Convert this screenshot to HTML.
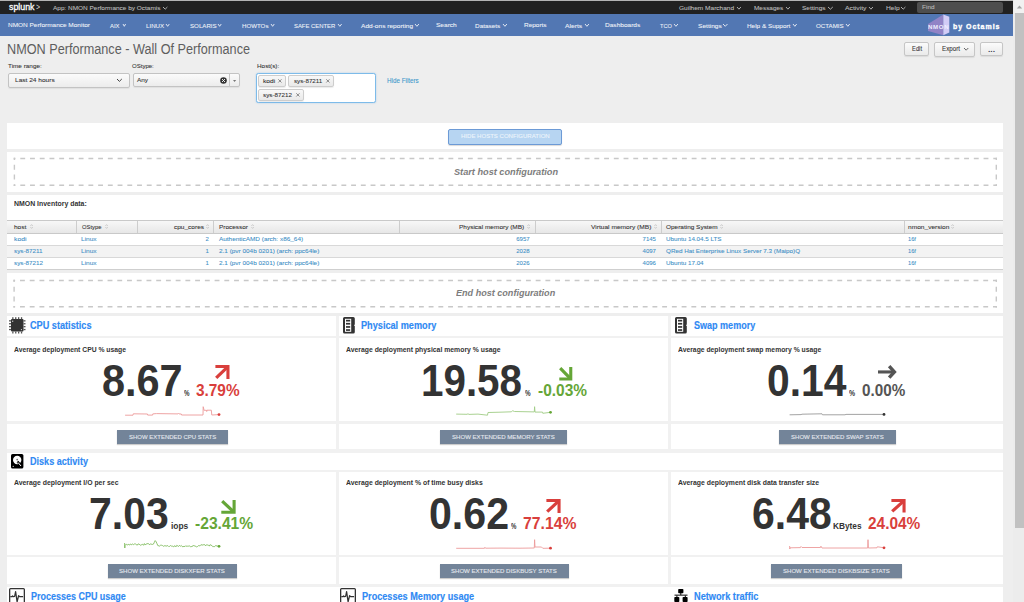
<!DOCTYPE html><html><head><meta charset="utf-8"><style>
html,body{margin:0;padding:0;}
body{width:1024px;height:602px;overflow:hidden;position:relative;background:#eeeeee;font-family:"Liberation Sans",sans-serif;}
.t{position:absolute;white-space:nowrap;transform-origin:0 0;}
.r{position:absolute;box-sizing:border-box;}
svg{position:absolute;overflow:visible;}
</style></head><body>
<div class="r" style="left:0.00px;top:0.00px;width:1013.00px;height:1.00px;background:#b4b4b4"></div>
<div class="r" style="left:0.00px;top:1.00px;width:1013.00px;height:13.00px;background:#212121"></div>
<div class="r" style="left:0.00px;top:14.00px;width:1013.00px;height:22.00px;background:#5277b3"></div>
<div class="r" style="left:1013.00px;top:0.00px;width:11.00px;height:602.00px;background:#ececec"></div>
<div class="r" style="left:1014.00px;top:0.00px;width:10.00px;height:13.00px;background:#f1f1f1"></div>
<svg style="left:1016px;top:4px" width="7" height="5"><polygon points="0.8,4.6 3.5,1.6 6.2,4.6" fill="#a3a3a3"/></svg>
<div class="r" style="left:1015.00px;top:13.00px;width:9.00px;height:515.00px;background:#c1c1c1"></div>
<div class="t" style="left:8.80px;top:2px;font-size:9.0px;line-height:normal;color:#ffffff;font-weight:normal;font-style:normal;transform:scaleX(0.9768);-webkit-text-stroke:0.3px #fff">splunk</div>
<div class="t" style="left:35.60px;top:1px;font-size:9.5px;line-height:normal;color:#d8d8d8;font-weight:normal;font-style:normal;transform:scaleX(0.7333);">&gt;</div>
<div class="t" style="left:52.70px;top:5px;font-size:5.7px;line-height:normal;color:#bdbdbd;font-weight:normal;font-style:normal;-webkit-text-stroke:0.08px #bdbdbd;transform:scaleX(1.1329);">App: NMON Performance by Octamis</div>
<svg style="left:161.50px;top:5.60px;opacity:1" width="6.4" height="4.2"><path d="M1 1 L3.20 3.20 L5.40 1" stroke="#bdbdbd" stroke-width="0.9" fill="none"/></svg>
<div class="t" style="left:679.20px;top:5px;font-size:5.7px;line-height:normal;color:#bdbdbd;font-weight:normal;font-style:normal;-webkit-text-stroke:0.08px #bdbdbd;transform:scaleX(1.1465);">Guilhem Marchand</div>
<svg style="left:735.80px;top:5.60px;opacity:1" width="5.900000000000091" height="4.2"><path d="M1 1 L2.95 3.20 L4.90 1" stroke="#bdbdbd" stroke-width="0.9" fill="none"/></svg>
<div class="t" style="left:753.50px;top:5px;font-size:5.7px;line-height:normal;color:#bdbdbd;font-weight:normal;font-style:normal;-webkit-text-stroke:0.08px #bdbdbd;transform:scaleX(1.1312);">Messages</div>
<svg style="left:784.60px;top:5.60px;opacity:1" width="5.899999999999977" height="4.2"><path d="M1 1 L2.95 3.20 L4.90 1" stroke="#bdbdbd" stroke-width="0.9" fill="none"/></svg>
<div class="t" style="left:802.30px;top:5px;font-size:5.7px;line-height:normal;color:#bdbdbd;font-weight:normal;font-style:normal;-webkit-text-stroke:0.08px #bdbdbd;transform:scaleX(1.1446);">Settings</div>
<svg style="left:826.80px;top:5.60px;opacity:1" width="6.800000000000068" height="4.2"><path d="M1 1 L3.40 3.20 L5.80 1" stroke="#bdbdbd" stroke-width="0.9" fill="none"/></svg>
<div class="t" style="left:845.20px;top:5px;font-size:5.7px;line-height:normal;color:#bdbdbd;font-weight:normal;font-style:normal;-webkit-text-stroke:0.08px #bdbdbd;transform:scaleX(1.1889);">Activity</div>
<svg style="left:868.00px;top:5.60px;opacity:1" width="5.899999999999977" height="4.2"><path d="M1 1 L2.95 3.20 L4.90 1" stroke="#bdbdbd" stroke-width="0.9" fill="none"/></svg>
<div class="t" style="left:885.60px;top:5px;font-size:5.7px;line-height:normal;color:#bdbdbd;font-weight:normal;font-style:normal;-webkit-text-stroke:0.08px #bdbdbd;transform:scaleX(1.1704);">Help</div>
<svg style="left:900.00px;top:5.60px;opacity:1" width="6.399999999999977" height="4.2"><path d="M1 1 L3.20 3.20 L5.40 1" stroke="#bdbdbd" stroke-width="0.9" fill="none"/></svg>
<div class="r" style="left:917.00px;top:2.40px;width:86.00px;height:10.30px;background:#4e4e4e;border-radius:2px"></div>
<div class="t" style="left:921.70px;top:4px;font-size:6.0px;line-height:normal;color:#b8b8b8;font-weight:normal;font-style:normal;-webkit-text-stroke:0.08px #b8b8b8;transform:scaleX(1.0763);">Find</div>
<div class="t" style="left:8.10px;top:21px;font-size:6.1px;line-height:normal;color:#eef2f8;font-weight:normal;font-style:normal;-webkit-text-stroke:0.08px #eef2f8;transform:scaleX(1.0612);">NMON Performance Monitor</div>
<div class="t" style="left:110.00px;top:22px;font-size:6.1px;line-height:normal;color:#eef2f8;font-weight:normal;font-style:normal;-webkit-text-stroke:0.08px #eef2f8;transform:scaleX(0.9634);">AIX</div>
<svg style="left:121.70px;top:23.30px;opacity:1" width="4.599999999999989" height="4.3"><path d="M1 1 L2.30 3.30 L3.60 1" stroke="#eef2f8" stroke-width="0.9" fill="none"/></svg>
<div class="t" style="left:145.50px;top:22px;font-size:6.1px;line-height:normal;color:#eef2f8;font-weight:normal;font-style:normal;-webkit-text-stroke:0.08px #eef2f8;transform:scaleX(1.0121);">LINUX</div>
<svg style="left:165.30px;top:23.30px;opacity:1" width="5.300000000000006" height="4.3"><path d="M1 1 L2.65 3.30 L4.30 1" stroke="#eef2f8" stroke-width="0.9" fill="none"/></svg>
<div class="t" style="left:189.50px;top:22px;font-size:6.1px;line-height:normal;color:#eef2f8;font-weight:normal;font-style:normal;-webkit-text-stroke:0.08px #eef2f8;transform:scaleX(1.0094);">SOLARIS</div>
<svg style="left:217.20px;top:23.30px;opacity:1" width="5.249999999999995" height="4.3"><path d="M1 1 L2.62 3.30 L4.25 1" stroke="#eef2f8" stroke-width="0.9" fill="none"/></svg>
<div class="t" style="left:241.50px;top:22px;font-size:6.1px;line-height:normal;color:#eef2f8;font-weight:normal;font-style:normal;-webkit-text-stroke:0.08px #eef2f8;transform:scaleX(1.0059);">HOWTOs</div>
<svg style="left:269.55px;top:23.30px;opacity:1" width="5.250000000000023" height="4.3"><path d="M1 1 L2.63 3.30 L4.25 1" stroke="#eef2f8" stroke-width="0.9" fill="none"/></svg>
<div class="t" style="left:293.50px;top:22px;font-size:6.1px;line-height:normal;color:#eef2f8;font-weight:normal;font-style:normal;-webkit-text-stroke:0.08px #eef2f8;transform:scaleX(0.9685);">SAFE CENTER</div>
<svg style="left:337.05px;top:23.30px;opacity:1" width="5.65" height="4.3"><path d="M1 1 L2.83 3.30 L4.65 1" stroke="#eef2f8" stroke-width="0.9" fill="none"/></svg>
<div class="t" style="left:361.00px;top:22px;font-size:6.1px;line-height:normal;color:#eef2f8;font-weight:normal;font-style:normal;-webkit-text-stroke:0.08px #eef2f8;transform:scaleX(1.0770);">Add-ons reporting</div>
<svg style="left:414.40px;top:23.30px;opacity:1" width="5.9" height="4.3"><path d="M1 1 L2.95 3.30 L4.90 1" stroke="#eef2f8" stroke-width="0.9" fill="none"/></svg>
<div class="t" style="left:435.90px;top:21px;font-size:6.1px;line-height:normal;color:#eef2f8;font-weight:normal;font-style:normal;-webkit-text-stroke:0.08px #eef2f8;transform:scaleX(1.0757);">Search</div>
<div class="t" style="left:475.00px;top:22px;font-size:6.1px;line-height:normal;color:#eef2f8;font-weight:normal;font-style:normal;-webkit-text-stroke:0.08px #eef2f8;transform:scaleX(1.0520);">Datasets</div>
<svg style="left:501.90px;top:23.30px;opacity:1" width="5.9" height="4.3"><path d="M1 1 L2.95 3.30 L4.90 1" stroke="#eef2f8" stroke-width="0.9" fill="none"/></svg>
<div class="t" style="left:523.50px;top:21px;font-size:6.1px;line-height:normal;color:#eef2f8;font-weight:normal;font-style:normal;-webkit-text-stroke:0.08px #eef2f8;transform:scaleX(1.0568);">Reports</div>
<div class="t" style="left:565.10px;top:22px;font-size:6.1px;line-height:normal;color:#eef2f8;font-weight:normal;font-style:normal;-webkit-text-stroke:0.08px #eef2f8;transform:scaleX(1.1043);">Alerts</div>
<svg style="left:583.70px;top:23.30px;opacity:1" width="5.9" height="4.3"><path d="M1 1 L2.95 3.30 L4.90 1" stroke="#eef2f8" stroke-width="0.9" fill="none"/></svg>
<div class="t" style="left:605.10px;top:21px;font-size:6.1px;line-height:normal;color:#eef2f8;font-weight:normal;font-style:normal;-webkit-text-stroke:0.08px #eef2f8;transform:scaleX(1.0728);">Dashboards</div>
<div class="t" style="left:659.75px;top:22px;font-size:6.1px;line-height:normal;color:#eef2f8;font-weight:normal;font-style:normal;-webkit-text-stroke:0.08px #eef2f8;transform:scaleX(0.9259);">TCO</div>
<svg style="left:672.90px;top:23.30px;opacity:1" width="5.9" height="4.3"><path d="M1 1 L2.95 3.30 L4.90 1" stroke="#eef2f8" stroke-width="0.9" fill="none"/></svg>
<div class="t" style="left:697.50px;top:22px;font-size:6.1px;line-height:normal;color:#eef2f8;font-weight:normal;font-style:normal;-webkit-text-stroke:0.08px #eef2f8;transform:scaleX(1.0809);">Settings</div>
<svg style="left:722.30px;top:23.30px;opacity:1" width="6.500000000000023" height="4.3"><path d="M1 1 L3.25 3.30 L5.50 1" stroke="#eef2f8" stroke-width="0.9" fill="none"/></svg>
<div class="t" style="left:746.50px;top:22px;font-size:6.1px;line-height:normal;color:#eef2f8;font-weight:normal;font-style:normal;-webkit-text-stroke:0.08px #eef2f8;transform:scaleX(1.0496);">Help &amp; Support</div>
<svg style="left:791.70px;top:23.30px;opacity:1" width="5.700000000000069" height="4.3"><path d="M1 1 L2.85 3.30 L4.70 1" stroke="#eef2f8" stroke-width="0.9" fill="none"/></svg>
<div class="t" style="left:815.70px;top:22px;font-size:6.1px;line-height:normal;color:#eef2f8;font-weight:normal;font-style:normal;-webkit-text-stroke:0.08px #eef2f8;transform:scaleX(1.0131);">OCTAMIS</div>
<svg style="left:844.80px;top:23.30px;opacity:1" width="5.699999999999955" height="4.3"><path d="M1 1 L2.85 3.30 L4.70 1" stroke="#eef2f8" stroke-width="0.9" fill="none"/></svg>
<svg style="left:0;top:0" width="1024" height="40"><polygon points="928,24 943.3,14.6 943.3,35.3 928,30.9" fill="#9183c6"/><polygon points="943.3,14.6 949.3,16.8 949.3,32.6 943.3,35.3" fill="#d2ccf6"/></svg>
<div class="t" style="left:927.90px;top:24px;font-size:5.4px;line-height:normal;color:#eeeeff;font-weight:bold;font-style:normal;letter-spacing:0.6px;transform:scaleX(1.1264);">NMON</div>
<div class="t" style="left:953.00px;top:22px;font-size:7.2px;line-height:normal;color:#ffffff;font-weight:bold;font-style:normal;letter-spacing:1.0px;transform:scaleX(0.9738);-webkit-text-stroke:0.35px #fff">by Octamis</div>
<div class="t" style="left:7.35px;top:41px;font-size:14.0px;line-height:normal;color:#5e5e5e;font-weight:normal;font-style:normal;transform:scaleX(0.9046);">NMON Performance - Wall Of Performance</div>
<div class="r" style="left:904.20px;top:41.50px;width:25.30px;height:14.10px;background:linear-gradient(#fbfbfb,#eaeaea);border:1px solid #c6c6c6;border-radius:2px;box-shadow:0 1px 1px rgba(0,0,0,0.08)"></div>
<div class="t" style="left:912.00px;top:45px;font-size:6.9px;line-height:normal;color:#333;font-weight:normal;font-style:normal;-webkit-text-stroke:0.08px #333;transform:scaleX(0.8445);">Edit</div>
<div class="r" style="left:934.30px;top:41.50px;width:41.20px;height:15.00px;background:linear-gradient(#fbfbfb,#eaeaea);border:1px solid #c6c6c6;border-radius:2px;box-shadow:0 1px 1px rgba(0,0,0,0.08)"></div>
<div class="t" style="left:941.80px;top:45px;font-size:6.9px;line-height:normal;color:#333;font-weight:normal;font-style:normal;-webkit-text-stroke:0.08px #333;transform:scaleX(0.9000);">Export</div>
<svg style="left:963.40px;top:47.20px;opacity:1" width="6.3" height="4.2"><path d="M1 1 L3.15 3.20 L5.30 1" stroke="#555" stroke-width="0.9" fill="none"/></svg>
<div class="r" style="left:980.40px;top:41.50px;width:22.20px;height:14.10px;background:linear-gradient(#fbfbfb,#eaeaea);border:1px solid #c6c6c6;border-radius:2px;box-shadow:0 1px 1px rgba(0,0,0,0.08)"></div>
<div class="t" style="left:988.00px;top:46px;font-size:6.9px;line-height:normal;color:#445;font-weight:bold;font-style:normal;transform:scaleX(1.2352);">...</div>
<div class="t" style="left:7.50px;top:63px;font-size:6.0px;line-height:normal;color:#333;font-weight:normal;font-style:normal;-webkit-text-stroke:0.08px #333;transform:scaleX(1.0615);">Time range:</div>
<div class="r" style="left:7.50px;top:73.30px;width:122.50px;height:14.30px;background:linear-gradient(#fbfbfb,#ececec);border:1px solid #c3c3c3;border-radius:2px;box-shadow:0 1px 1px rgba(0,0,0,0.06)"></div>
<div class="t" style="left:14.70px;top:77px;font-size:6.0px;line-height:normal;color:#333;font-weight:normal;font-style:normal;-webkit-text-stroke:0.08px #333;transform:scaleX(1.0919);">Last 24 hours</div>
<svg style="left:116.10px;top:78.25px;opacity:1" width="6.8" height="4.4"><path d="M1 1 L3.40 3.40 L5.80 1" stroke="#444" stroke-width="1.0" fill="none"/></svg>
<div class="t" style="left:132.10px;top:63px;font-size:6.0px;line-height:normal;color:#333;font-weight:normal;font-style:normal;-webkit-text-stroke:0.08px #333;transform:scaleX(1.0041);">OStype:</div>
<div class="r" style="left:132.50px;top:73.30px;width:107.00px;height:14.20px;background:linear-gradient(#fbfbfb,#ececec);border:1px solid #c3c3c3;border-radius:2px;box-shadow:0 1px 1px rgba(0,0,0,0.06)"></div>
<div class="r" style="left:229.30px;top:73.30px;width:1.00px;height:14.20px;background:#c6c6c6"></div>
<svg style="left:219.6px;top:76.6px" width="7" height="7"><circle cx="3.5" cy="3.5" r="3.3" fill="#333"/><path d="M2.1 2.1 L4.9 4.9 M4.9 2.1 L2.1 4.9" stroke="#fff" stroke-width="1"/></svg>
<svg style="left:232.6px;top:80.4px" width="4" height="3"><polygon points="0,0 3.2,0 1.6,2" fill="#777"/></svg>
<div class="t" style="left:137.25px;top:77px;font-size:6.0px;line-height:normal;color:#333;font-weight:normal;font-style:normal;-webkit-text-stroke:0.08px #333;transform:scaleX(1.0639);">Any</div>
<div class="t" style="left:256.50px;top:63px;font-size:6.0px;line-height:normal;color:#333;font-weight:normal;font-style:normal;-webkit-text-stroke:0.08px #333;transform:scaleX(1.0594);">Host(s):</div>
<div class="r" style="left:256.30px;top:73.10px;width:119.50px;height:29.50px;background:#fff;border:1px solid #7dbbe9;border-radius:2.5px;box-shadow:0 0 1.5px rgba(80,160,230,0.6)"></div>
<div class="r" style="left:258.30px;top:75.30px;width:27.50px;height:11.30px;background:linear-gradient(#f8f8f8,#e9e9e9);border:1px solid #cdcdcd;border-radius:2px;box-shadow:0 1px 1px rgba(0,0,0,0.08)"></div>
<div class="t" style="left:263.40px;top:78px;font-size:6.0px;line-height:normal;color:#333;font-weight:normal;font-style:normal;-webkit-text-stroke:0.08px #333;transform:scaleX(1.1102);">kodi</div>
<svg style="left:278.4px;top:79.2px" width="4" height="4"><path d="M0.3 0.3 L3.5 3.5 M3.5 0.3 L0.3 3.5" stroke="#777" stroke-width="0.85"/></svg>
<div class="r" style="left:288.30px;top:75.30px;width:45.30px;height:11.30px;background:linear-gradient(#f8f8f8,#e9e9e9);border:1px solid #cdcdcd;border-radius:2px;box-shadow:0 1px 1px rgba(0,0,0,0.08)"></div>
<div class="t" style="left:293.70px;top:78px;font-size:6.0px;line-height:normal;color:#333;font-weight:normal;font-style:normal;-webkit-text-stroke:0.08px #333;transform:scaleX(1.0394);">sys-87211</div>
<svg style="left:326.2px;top:79.2px" width="4" height="4"><path d="M0.3 0.3 L3.5 3.5 M3.5 0.3 L0.3 3.5" stroke="#777" stroke-width="0.85"/></svg>
<div class="r" style="left:258.30px;top:89.30px;width:45.50px;height:11.40px;background:linear-gradient(#f8f8f8,#e9e9e9);border:1px solid #cdcdcd;border-radius:2px;box-shadow:0 1px 1px rgba(0,0,0,0.08)"></div>
<div class="t" style="left:263.40px;top:92px;font-size:6.0px;line-height:normal;color:#333;font-weight:normal;font-style:normal;-webkit-text-stroke:0.08px #333;transform:scaleX(1.0442);">sys-87212</div>
<svg style="left:296.2px;top:93.30000000000001px" width="4" height="4"><path d="M0.3 0.3 L3.5 3.5 M3.5 0.3 L0.3 3.5" stroke="#777" stroke-width="0.85"/></svg>
<div class="t" style="left:386.70px;top:77px;font-size:6.8px;line-height:normal;color:#3d97cb;font-weight:normal;font-style:normal;-webkit-text-stroke:0.08px #3d97cb;transform:scaleX(0.9236);">Hide Filters</div>
<div class="r" style="left:7.00px;top:123.20px;width:996.00px;height:25.70px;background:#ffffff"></div>
<div class="r" style="left:448.30px;top:128.60px;width:113.70px;height:16.10px;background:#b7d5f2;border:1px solid #6c9ad6;border-radius:2px;box-shadow:0 1px 1px rgba(0,0,0,0.15)"></div>
<div class="t" style="left:460.60px;top:133px;font-size:5.2px;line-height:normal;color:#eef5fc;font-weight:normal;font-style:normal;-webkit-text-stroke:0.08px #eef5fc;transform:scaleX(1.1629);">HIDE HOSTS CONFIGURATION</div>
<div class="r" style="left:7.00px;top:152.40px;width:996.00px;height:39.60px;background:#ffffff"></div>
<svg style="left:0;top:0" width="1024" height="602"><line x1="13.7" y1="158.5" x2="997" y2="158.5" stroke="#c8c8c8" stroke-width="1.4" stroke-dasharray="4.87 4.86" stroke-dashoffset="3.13"/><line x1="13.7" y1="185.3" x2="997" y2="185.3" stroke="#c8c8c8" stroke-width="1.4" stroke-dasharray="4.87 4.86" stroke-dashoffset="3.13"/><line x1="14.399999999999999" y1="157.8" x2="14.399999999999999" y2="186" stroke="#c8c8c8" stroke-width="1.4" stroke-dasharray="4.87 4.86" stroke-dashoffset="2.73"/><line x1="996.3" y1="157.8" x2="996.3" y2="186" stroke="#c8c8c8" stroke-width="1.4" stroke-dasharray="4.87 4.86" stroke-dashoffset="2.73"/></svg>
<div class="t" style="left:453.75px;top:166px;font-size:9.8px;line-height:normal;color:#7d7d7d;font-weight:bold;font-style:italic;transform:scaleX(0.9366);">Start host configuration</div>
<div class="r" style="left:7.00px;top:194.70px;width:996.00px;height:75.30px;background:#ffffff"></div>
<div class="t" style="left:14.10px;top:199px;font-size:7.2px;line-height:normal;color:#333;font-weight:bold;font-style:normal;transform:scaleX(0.9643);">NMON Inventory data:</div>
<div class="r" style="left:7.00px;top:220.20px;width:996.00px;height:14.00px;background:linear-gradient(#f7f7f7,#e7e7e7);border-top:1px solid #c9c9c9;border-bottom:1px solid #c9c9c9"></div>
<div class="r" style="left:76.40px;top:221.00px;width:0.90px;height:12.20px;background:#cdcdcd"></div>
<div class="r" style="left:137.30px;top:221.00px;width:0.90px;height:12.20px;background:#cdcdcd"></div>
<div class="r" style="left:213.40px;top:221.00px;width:0.90px;height:12.20px;background:#cdcdcd"></div>
<div class="r" style="left:398.80px;top:221.00px;width:0.90px;height:12.20px;background:#cdcdcd"></div>
<div class="r" style="left:534.50px;top:221.00px;width:0.90px;height:12.20px;background:#cdcdcd"></div>
<div class="r" style="left:660.60px;top:221.00px;width:0.90px;height:12.20px;background:#cdcdcd"></div>
<div class="r" style="left:903.50px;top:221.00px;width:0.90px;height:12.20px;background:#cdcdcd"></div>
<div class="r" style="left:7.00px;top:234.20px;width:996.00px;height:12.00px;background:#fff;border-bottom:1px solid #d8d8d8"></div>
<div class="r" style="left:7.00px;top:246.20px;width:996.00px;height:12.00px;background:#f3f3f3;border-bottom:1px solid #d8d8d8"></div>
<div class="r" style="left:7.00px;top:258.20px;width:996.00px;height:12.00px;background:#fff;border-bottom:1px solid #cfcfcf"></div>
<div class="t" style="left:14.10px;top:224px;font-size:6.0px;line-height:normal;color:#333;font-weight:normal;font-style:normal;-webkit-text-stroke:0.08px #333;transform:scaleX(1.0836);">host</div>
<svg style="left:29.5px;top:224.20000000000002px" width="4" height="5"><path d="M0.4 2 L1.6 0.6 L2.8 2 M0.4 3 L1.6 4.4 L2.8 3" stroke="#b5b5b5" stroke-width="0.6" fill="none"/></svg>
<div class="t" style="left:81.60px;top:224px;font-size:6.0px;line-height:normal;color:#333;font-weight:normal;font-style:normal;-webkit-text-stroke:0.08px #333;transform:scaleX(0.9675);">OStype</div>
<svg style="left:104.7px;top:224.20000000000002px" width="4" height="5"><path d="M0.4 2 L1.6 0.6 L2.8 2 M0.4 3 L1.6 4.4 L2.8 3" stroke="#b5b5b5" stroke-width="0.6" fill="none"/></svg>
<div class="t" style="left:174.10px;top:224px;font-size:6.0px;line-height:normal;color:#333;font-weight:normal;font-style:normal;-webkit-text-stroke:0.08px #333;transform:scaleX(1.0837);">cpu_cores</div>
<svg style="left:206.4px;top:224.20000000000002px" width="4" height="5"><path d="M0.4 2 L1.6 0.6 L2.8 2 M0.4 3 L1.6 4.4 L2.8 3" stroke="#b5b5b5" stroke-width="0.6" fill="none"/></svg>
<div class="t" style="left:218.90px;top:224px;font-size:6.0px;line-height:normal;color:#333;font-weight:normal;font-style:normal;-webkit-text-stroke:0.08px #333;transform:scaleX(1.0699);">Processor</div>
<svg style="left:250.6px;top:224.20000000000002px" width="4" height="5"><path d="M0.4 2 L1.6 0.6 L2.8 2 M0.4 3 L1.6 4.4 L2.8 3" stroke="#b5b5b5" stroke-width="0.6" fill="none"/></svg>
<div class="t" style="left:458.75px;top:224px;font-size:6.0px;line-height:normal;color:#333;font-weight:normal;font-style:normal;-webkit-text-stroke:0.08px #333;transform:scaleX(1.0813);">Physical memory (MB)</div>
<svg style="left:527.2px;top:224.20000000000002px" width="4" height="5"><path d="M0.4 2 L1.6 0.6 L2.8 2 M0.4 3 L1.6 4.4 L2.8 3" stroke="#b5b5b5" stroke-width="0.6" fill="none"/></svg>
<div class="t" style="left:590.90px;top:224px;font-size:6.0px;line-height:normal;color:#333;font-weight:normal;font-style:normal;-webkit-text-stroke:0.08px #333;transform:scaleX(1.0993);">Virtual memory (MB)</div>
<svg style="left:653.9px;top:224.20000000000002px" width="4" height="5"><path d="M0.4 2 L1.6 0.6 L2.8 2 M0.4 3 L1.6 4.4 L2.8 3" stroke="#b5b5b5" stroke-width="0.6" fill="none"/></svg>
<div class="t" style="left:665.60px;top:224px;font-size:6.0px;line-height:normal;color:#333;font-weight:normal;font-style:normal;-webkit-text-stroke:0.08px #333;transform:scaleX(1.0745);">Operating System</div>
<svg style="left:720px;top:224.20000000000002px" width="4" height="5"><path d="M0.4 2 L1.6 0.6 L2.8 2 M0.4 3 L1.6 4.4 L2.8 3" stroke="#b5b5b5" stroke-width="0.6" fill="none"/></svg>
<div class="t" style="left:908.00px;top:224px;font-size:6.0px;line-height:normal;color:#333;font-weight:normal;font-style:normal;-webkit-text-stroke:0.08px #333;transform:scaleX(1.0977);">nmon_version</div>
<svg style="left:951.4px;top:224.20000000000002px" width="4" height="5"><path d="M0.4 2 L1.6 0.6 L2.8 2 M0.4 3 L1.6 4.4 L2.8 3" stroke="#b5b5b5" stroke-width="0.6" fill="none"/></svg>
<div class="t" style="left:14.05px;top:236px;font-size:6.0px;line-height:normal;color:#3d8fc6;font-weight:normal;font-style:normal;-webkit-text-stroke:0.08px #3d8fc6;transform:scaleX(1.1289);">kodi</div>
<div class="t" style="left:80.75px;top:236px;font-size:6.0px;line-height:normal;color:#3d8fc6;font-weight:normal;font-style:normal;-webkit-text-stroke:0.08px #3d8fc6;transform:scaleX(1.0876);">Linux</div>
<div class="t" style="left:205.50px;top:236px;font-size:6.0px;line-height:normal;color:#3d8fc6;font-weight:normal;font-style:normal;-webkit-text-stroke:0.08px #3d8fc6;">2</div>
<div class="t" style="left:218.90px;top:236px;font-size:6.0px;line-height:normal;color:#3d8fc6;font-weight:normal;font-style:normal;-webkit-text-stroke:0.08px #3d8fc6;transform:scaleX(1.0685);">AuthenticAMD (arch: x86_64)</div>
<div class="t" style="left:516.29px;top:236px;font-size:6.0px;line-height:normal;color:#3d8fc6;font-weight:normal;font-style:normal;-webkit-text-stroke:0.08px #3d8fc6;">6957</div>
<div class="t" style="left:642.59px;top:236px;font-size:6.0px;line-height:normal;color:#3d8fc6;font-weight:normal;font-style:normal;-webkit-text-stroke:0.08px #3d8fc6;">7145</div>
<div class="t" style="left:665.60px;top:236px;font-size:6.0px;line-height:normal;color:#3d8fc6;font-weight:normal;font-style:normal;-webkit-text-stroke:0.08px #3d8fc6;transform:scaleX(1.0421);">Ubuntu 14.04.5 LTS</div>
<div class="t" style="left:908.00px;top:236px;font-size:6.0px;line-height:normal;color:#3d8fc6;font-weight:normal;font-style:normal;-webkit-text-stroke:0.08px #3d8fc6;transform:scaleX(0.9511);">16f</div>
<div class="t" style="left:14.05px;top:248px;font-size:6.0px;line-height:normal;color:#3d8fc6;font-weight:normal;font-style:normal;-webkit-text-stroke:0.08px #3d8fc6;transform:scaleX(1.0466);">sys-87211</div>
<div class="t" style="left:80.75px;top:248px;font-size:6.0px;line-height:normal;color:#3d8fc6;font-weight:normal;font-style:normal;-webkit-text-stroke:0.08px #3d8fc6;transform:scaleX(1.0876);">Linux</div>
<div class="t" style="left:205.50px;top:248px;font-size:6.0px;line-height:normal;color:#3d8fc6;font-weight:normal;font-style:normal;-webkit-text-stroke:0.08px #3d8fc6;">1</div>
<div class="t" style="left:218.90px;top:248px;font-size:6.0px;line-height:normal;color:#3d8fc6;font-weight:normal;font-style:normal;-webkit-text-stroke:0.08px #3d8fc6;transform:scaleX(1.0664);">2.1 (pvr 004b 0201) (arch: ppc64le)</div>
<div class="t" style="left:516.29px;top:248px;font-size:6.0px;line-height:normal;color:#3d8fc6;font-weight:normal;font-style:normal;-webkit-text-stroke:0.08px #3d8fc6;">2028</div>
<div class="t" style="left:642.59px;top:248px;font-size:6.0px;line-height:normal;color:#3d8fc6;font-weight:normal;font-style:normal;-webkit-text-stroke:0.08px #3d8fc6;">4097</div>
<div class="t" style="left:665.60px;top:248px;font-size:6.0px;line-height:normal;color:#3d8fc6;font-weight:normal;font-style:normal;-webkit-text-stroke:0.08px #3d8fc6;transform:scaleX(1.0496);">QRed Hat Enterprise Linux Server 7.3 (Maipo)Q</div>
<div class="t" style="left:908.00px;top:248px;font-size:6.0px;line-height:normal;color:#3d8fc6;font-weight:normal;font-style:normal;-webkit-text-stroke:0.08px #3d8fc6;transform:scaleX(0.9511);">16f</div>
<div class="t" style="left:14.05px;top:260px;font-size:6.0px;line-height:normal;color:#3d8fc6;font-weight:normal;font-style:normal;-webkit-text-stroke:0.08px #3d8fc6;transform:scaleX(1.0442);">sys-87212</div>
<div class="t" style="left:80.75px;top:260px;font-size:6.0px;line-height:normal;color:#3d8fc6;font-weight:normal;font-style:normal;-webkit-text-stroke:0.08px #3d8fc6;transform:scaleX(1.0876);">Linux</div>
<div class="t" style="left:205.50px;top:260px;font-size:6.0px;line-height:normal;color:#3d8fc6;font-weight:normal;font-style:normal;-webkit-text-stroke:0.08px #3d8fc6;">1</div>
<div class="t" style="left:218.90px;top:260px;font-size:6.0px;line-height:normal;color:#3d8fc6;font-weight:normal;font-style:normal;-webkit-text-stroke:0.08px #3d8fc6;transform:scaleX(1.0664);">2.1 (pvr 004b 0201) (arch: ppc64le)</div>
<div class="t" style="left:516.29px;top:260px;font-size:6.0px;line-height:normal;color:#3d8fc6;font-weight:normal;font-style:normal;-webkit-text-stroke:0.08px #3d8fc6;">2026</div>
<div class="t" style="left:642.59px;top:260px;font-size:6.0px;line-height:normal;color:#3d8fc6;font-weight:normal;font-style:normal;-webkit-text-stroke:0.08px #3d8fc6;">4096</div>
<div class="t" style="left:665.60px;top:260px;font-size:6.0px;line-height:normal;color:#3d8fc6;font-weight:normal;font-style:normal;-webkit-text-stroke:0.08px #3d8fc6;transform:scaleX(1.0438);">Ubuntu 17.04</div>
<div class="t" style="left:908.00px;top:260px;font-size:6.0px;line-height:normal;color:#3d8fc6;font-weight:normal;font-style:normal;-webkit-text-stroke:0.08px #3d8fc6;transform:scaleX(0.9511);">16f</div>
<div class="r" style="left:7.00px;top:273.40px;width:996.00px;height:39.40px;background:#ffffff"></div>
<svg style="left:0;top:0" width="1024" height="602"><line x1="13.4" y1="280.5" x2="997" y2="280.5" stroke="#c8c8c8" stroke-width="1.4" stroke-dasharray="4.87 4.86" stroke-dashoffset="3.13"/><line x1="13.4" y1="306.8" x2="997" y2="306.8" stroke="#c8c8c8" stroke-width="1.4" stroke-dasharray="4.87 4.86" stroke-dashoffset="3.13"/><line x1="14.1" y1="279.8" x2="14.1" y2="307.5" stroke="#c8c8c8" stroke-width="1.4" stroke-dasharray="4.87 4.86" stroke-dashoffset="2.73"/><line x1="996.3" y1="279.8" x2="996.3" y2="307.5" stroke="#c8c8c8" stroke-width="1.4" stroke-dasharray="4.87 4.86" stroke-dashoffset="2.73"/></svg>
<div class="t" style="left:455.80px;top:287px;font-size:9.8px;line-height:normal;color:#7d7d7d;font-weight:bold;font-style:italic;transform:scaleX(0.9251);">End host configuration</div>
<div class="r" style="left:7.00px;top:316.30px;width:996.00px;height:285.70px;background:#f1f1f1"></div>
<div class="r" style="left:7.00px;top:316.30px;width:329.30px;height:19.50px;background:#ffffff"></div>
<div class="r" style="left:7.00px;top:338.20px;width:329.30px;height:82.80px;background:#ffffff"></div>
<div class="r" style="left:7.00px;top:423.60px;width:329.30px;height:25.70px;background:#ffffff"></div>
<div class="r" style="left:338.60px;top:316.30px;width:329.60px;height:19.50px;background:#ffffff"></div>
<div class="r" style="left:338.60px;top:338.20px;width:329.60px;height:82.80px;background:#ffffff"></div>
<div class="r" style="left:338.60px;top:423.60px;width:329.60px;height:25.70px;background:#ffffff"></div>
<div class="r" style="left:670.60px;top:316.30px;width:332.40px;height:19.50px;background:#ffffff"></div>
<div class="r" style="left:670.60px;top:338.20px;width:332.40px;height:82.80px;background:#ffffff"></div>
<div class="r" style="left:670.60px;top:423.60px;width:332.40px;height:25.70px;background:#ffffff"></div>
<div class="t" style="left:30.00px;top:320px;font-size:10.2px;line-height:normal;color:#2f89f3;font-weight:bold;font-style:normal;transform:scaleX(0.8977);-webkit-text-stroke:0.15px #2f89f3">CPU statistics</div>
<div class="t" style="left:361.40px;top:320px;font-size:10.2px;line-height:normal;color:#2f89f3;font-weight:bold;font-style:normal;transform:scaleX(0.8985);-webkit-text-stroke:0.15px #2f89f3">Physical memory</div>
<div class="t" style="left:693.80px;top:320px;font-size:10.2px;line-height:normal;color:#2f89f3;font-weight:bold;font-style:normal;transform:scaleX(0.8861);-webkit-text-stroke:0.15px #2f89f3">Swap memory</div>
<div class="r" style="left:7.00px;top:453.20px;width:996.00px;height:16.60px;background:#ffffff"></div>
<div class="r" style="left:7.00px;top:472.00px;width:329.30px;height:82.50px;background:#ffffff"></div>
<div class="r" style="left:7.00px;top:557.00px;width:329.30px;height:27.20px;background:#ffffff"></div>
<div class="r" style="left:338.60px;top:472.00px;width:329.60px;height:82.50px;background:#ffffff"></div>
<div class="r" style="left:338.60px;top:557.00px;width:329.60px;height:27.20px;background:#ffffff"></div>
<div class="r" style="left:670.60px;top:472.00px;width:332.40px;height:82.50px;background:#ffffff"></div>
<div class="r" style="left:670.60px;top:557.00px;width:332.40px;height:27.20px;background:#ffffff"></div>
<div class="t" style="left:30.25px;top:456px;font-size:10.2px;line-height:normal;color:#2f89f3;font-weight:bold;font-style:normal;transform:scaleX(0.8899);-webkit-text-stroke:0.15px #2f89f3">Disks activity</div>
<div class="r" style="left:7.00px;top:586.70px;width:996.00px;height:15.30px;background:#ffffff"></div>
<div class="t" style="left:30.70px;top:591px;font-size:10.2px;line-height:normal;color:#2f89f3;font-weight:bold;font-style:normal;transform:scaleX(0.8812);-webkit-text-stroke:0.15px #2f89f3">Processes CPU usage</div>
<div class="t" style="left:361.80px;top:591px;font-size:10.2px;line-height:normal;color:#2f89f3;font-weight:bold;font-style:normal;transform:scaleX(0.8958);-webkit-text-stroke:0.15px #2f89f3">Processes Memory usage</div>
<div class="t" style="left:693.80px;top:591px;font-size:10.2px;line-height:normal;color:#2f89f3;font-weight:bold;font-style:normal;transform:scaleX(0.9029);-webkit-text-stroke:0.15px #2f89f3">Network traffic</div>
<div class="t" style="left:14.25px;top:345px;font-size:7.2px;line-height:normal;color:#333;font-weight:bold;font-style:normal;transform:scaleX(0.9422);">Average deployment CPU % usage</div>
<div class="t" style="left:102.37px;top:356px;font-size:44.5px;line-height:normal;color:#333333;font-weight:bold;font-style:normal;transform:scaleX(0.9313);">8.67</div>
<div class="t" style="left:184.40px;top:387px;font-size:9.6px;line-height:normal;color:#333;font-weight:bold;font-style:normal;transform:scaleX(0.6444);">%</div>
<div class="t" style="left:196.30px;top:381px;font-size:16.4px;line-height:normal;color:#d93f3c;font-weight:bold;font-style:normal;transform:scaleX(0.9381);">3.79%</div>
<svg style="left:214.6px;top:364.9px" width="14.5" height="14.0"><path d="M0.4 1.5 H12.95 V14.0" stroke="#d93f3c" stroke-width="3.1" fill="none" stroke-linejoin="miter"/><path d="M1.2 12.8 L11.9 2.6" stroke="#d93f3c" stroke-width="3.2" fill="none"/></svg>
<svg style="left:0;top:0" width="1024" height="602"><path d="M125.10 415.20 L133.00 415.20 L133.30 413.80 L147.50 414.00 L147.70 415.10 L152.60 415.10 L152.80 413.90 L156.40 413.60 L178.00 413.90 L178.50 413.30 L179.00 413.90 L181.30 414.00 L181.50 415.00 L203.00 415.00 L203.20 406.70 L204.10 410.30 L206.50 410.30 L206.70 411.50 L207.00 410.20 L211.30 410.20 L211.80 415.00 L219.00 414.60" stroke="#ec9a9a" stroke-width="0.9" fill="none" stroke-linejoin="round"/><circle cx="219" cy="414.6" r="1.4" fill="#d93f3c"/></svg>
<div class="r" style="left:116.60px;top:429.80px;width:111.30px;height:14.70px;background:#738499;box-shadow:0 1px 1px rgba(0,0,0,0.2)"></div>
<div class="t" style="left:128.60px;top:434px;font-size:5.2px;line-height:normal;color:#e6eaf0;font-weight:normal;font-style:normal;-webkit-text-stroke:0.08px #e6eaf0;transform:scaleX(1.1530);">SHOW EXTENDED CPU STATS</div>
<div class="t" style="left:345.85px;top:345px;font-size:7.2px;line-height:normal;color:#333;font-weight:bold;font-style:normal;transform:scaleX(0.9519);">Average deployment physical memory % usage</div>
<div class="t" style="left:420.69px;top:356px;font-size:44.5px;line-height:normal;color:#333333;font-weight:bold;font-style:normal;transform:scaleX(0.9069);">19.58</div>
<div class="t" style="left:524.60px;top:387px;font-size:9.6px;line-height:normal;color:#333;font-weight:bold;font-style:normal;transform:scaleX(0.6556);">%</div>
<div class="t" style="left:537.70px;top:381px;font-size:16.4px;line-height:normal;color:#65a637;font-weight:bold;font-style:normal;transform:scaleX(0.9435);">-0.03%</div>
<svg style="left:558.8px;top:366.75px" width="13.300000000000068" height="13.550000000000011"><path d="M11.750000000000068 0 V12.00000000000001 H0.3" stroke="#65a637" stroke-width="3.1" fill="none" stroke-linejoin="miter"/><path d="M1.2 1.2 L10.700000000000069 10.950000000000012" stroke="#65a637" stroke-width="3.2" fill="none"/></svg>
<svg style="left:0;top:0" width="1024" height="602"><path d="M456.20 414.10 L467.00 414.30 L468.00 413.80 L469.00 414.40 L478.00 414.10 L487.50 415.20 L488.00 412.50 L500.00 412.20 L511.50 411.80 L512.50 410.70 L514.50 411.50 L534.30 411.90 L534.60 406.70 L535.00 412.10 L542.50 412.10 L542.80 413.30 L550.50 412.30" stroke="#9fcc85" stroke-width="0.9" fill="none" stroke-linejoin="round"/><circle cx="550.5" cy="412.3" r="1.4" fill="#65a637"/></svg>
<div class="r" style="left:440.25px;top:429.80px;width:126.75px;height:14.70px;background:#738499;box-shadow:0 1px 1px rgba(0,0,0,0.2)"></div>
<div class="t" style="left:451.70px;top:434px;font-size:5.2px;line-height:normal;color:#e6eaf0;font-weight:normal;font-style:normal;-webkit-text-stroke:0.08px #e6eaf0;transform:scaleX(1.1702);">SHOW EXTENDED MEMORY STATS</div>
<div class="t" style="left:677.85px;top:345px;font-size:7.2px;line-height:normal;color:#333;font-weight:bold;font-style:normal;transform:scaleX(0.9451);">Average deployment swap memory % usage</div>
<div class="t" style="left:767.38px;top:356px;font-size:44.5px;line-height:normal;color:#333333;font-weight:bold;font-style:normal;transform:scaleX(0.9166);">0.14</div>
<div class="t" style="left:848.80px;top:387px;font-size:9.6px;line-height:normal;color:#333;font-weight:bold;font-style:normal;transform:scaleX(0.7111);">%</div>
<div class="t" style="left:862.00px;top:381px;font-size:16.4px;line-height:normal;color:#555555;font-weight:bold;font-style:normal;transform:scaleX(0.9296);">0.00%</div>
<svg style="left:878px;top:365.1px" width="18.600000000000023" height="13.899999999999977"><path d="M0 6.949999999999989 H16.100000000000023" stroke="#555555" stroke-width="3.1" fill="none"/><path d="M11.160000000000013 1.2 L16.400000000000023 6.949999999999989 L11.160000000000013 12.699999999999978" stroke="#555555" stroke-width="3.4" fill="none" stroke-linejoin="miter"/></svg>
<svg style="left:0;top:0" width="1024" height="602"><path d="M789.60 414.80 L801.00 414.60 L802.00 414.20 L822.00 413.80 L822.50 414.80 L845.00 414.80 L846.00 414.40 L884.00 414.40" stroke="#999999" stroke-width="0.9" fill="none" stroke-linejoin="round"/><circle cx="884" cy="414.4" r="1.4" fill="#333333"/></svg>
<div class="r" style="left:778.80px;top:429.80px;width:116.90px;height:14.70px;background:#738499;box-shadow:0 1px 1px rgba(0,0,0,0.2)"></div>
<div class="t" style="left:790.50px;top:434px;font-size:5.2px;line-height:normal;color:#e6eaf0;font-weight:normal;font-style:normal;-webkit-text-stroke:0.08px #e6eaf0;transform:scaleX(1.1647);">SHOW EXTENDED SWAP STATS</div>
<div class="t" style="left:14.25px;top:478px;font-size:7.2px;line-height:normal;color:#333;font-weight:bold;font-style:normal;transform:scaleX(0.9571);">Average deployment I/O per sec</div>
<div class="t" style="left:88.88px;top:489px;font-size:44.5px;line-height:normal;color:#333333;font-weight:bold;font-style:normal;transform:scaleX(0.9203);">7.03</div>
<div class="t" style="left:170.80px;top:520px;font-size:9.6px;line-height:normal;color:#333;font-weight:bold;font-style:normal;transform:scaleX(0.8769);">iops</div>
<div class="t" style="left:195.20px;top:514px;font-size:16.4px;line-height:normal;color:#65a637;font-weight:bold;font-style:normal;transform:scaleX(0.9532);">-23.41%</div>
<svg style="left:220.9px;top:499.85px" width="14.650000000000006" height="13.850000000000023"><path d="M13.100000000000005 0 V12.300000000000022 H0.3" stroke="#65a637" stroke-width="3.1" fill="none" stroke-linejoin="miter"/><path d="M1.2 1.2 L12.050000000000006 11.250000000000023" stroke="#65a637" stroke-width="3.2" fill="none"/></svg>
<svg style="left:0;top:0" width="1024" height="602"><path d="M124.60 543.00 L124.80 548.00 L125.00 545.30 L125.50 544.67 L126.40 544.33 L127.30 545.20 L128.20 544.13 L129.10 544.94 L130.00 544.61 L130.90 544.03 L131.80 544.81 L132.70 543.94 L133.60 544.62 L134.50 543.94 L135.40 543.95 L136.30 544.53 L137.20 545.22 L138.10 543.93 L139.00 544.08 L139.90 544.78 L140.80 545.33 L141.70 544.64 L142.60 544.29 L143.50 545.30 L144.40 543.60 L145.30 545.04 L146.20 543.99 L147.10 543.70 L148.00 543.62 L148.90 543.94 L149.80 544.83 L150.70 543.65 L151.60 544.35 L152.50 544.43 L153.40 544.15 L154.30 542.40 L155.20 540.60 L156.10 541.74 L157.00 543.72 L157.90 545.70 L158.80 545.77 L159.70 546.09 L160.60 545.21 L161.50 545.21 L162.40 545.47 L163.30 546.32 L164.20 545.87 L165.10 545.67 L166.00 546.15 L166.90 545.92 L167.80 545.64 L168.70 546.53 L169.60 546.36 L170.50 545.54 L171.40 546.13 L172.30 546.05 L173.20 546.68 L174.10 546.41 L175.00 545.62 L175.90 546.86 L176.80 545.31 L177.70 545.85 L178.60 546.46 L179.50 545.37 L180.40 546.28 L181.30 545.47 L182.20 546.60 L183.10 546.78 L184.00 546.13 L184.90 546.68 L185.80 545.66 L186.70 546.35 L187.60 546.17 L188.50 546.14 L189.40 545.92 L190.30 546.61 L191.20 546.80 L192.10 545.95 L193.00 546.30 L193.90 545.21 L194.80 546.36 L195.70 546.26 L196.60 546.89 L197.50 546.58 L198.40 545.61 L199.30 545.79 L200.20 545.70 L201.10 544.54 L202.00 545.33 L202.90 544.80 L203.80 544.71 L204.70 544.61 L205.60 545.88 L206.50 544.73 L207.40 544.95 L208.30 545.20 L209.20 546.07 L210.10 544.65 L211.00 545.31 L211.90 545.49 L212.80 546.69 L213.70 546.57 L214.60 546.66 L215.50 545.60 L216.40 545.85 L217.30 545.75 L218.20 546.69 L219.00 546.30" stroke="#7fbb5c" stroke-width="0.9" fill="none" stroke-linejoin="round"/><circle cx="219" cy="546.3" r="1.4" fill="#65a637"/></svg>
<div class="r" style="left:107.80px;top:563.80px;width:129.20px;height:14.30px;background:#738499;box-shadow:0 1px 1px rgba(0,0,0,0.2)"></div>
<div class="t" style="left:119.00px;top:568px;font-size:5.2px;line-height:normal;color:#e6eaf0;font-weight:normal;font-style:normal;-webkit-text-stroke:0.08px #e6eaf0;transform:scaleX(1.1686);">SHOW EXTENDED DISKXFER STATS</div>
<div class="t" style="left:345.85px;top:478px;font-size:7.2px;line-height:normal;color:#333;font-weight:bold;font-style:normal;transform:scaleX(0.9524);">Average deployment % of time busy disks</div>
<div class="t" style="left:429.38px;top:489px;font-size:44.5px;line-height:normal;color:#333333;font-weight:bold;font-style:normal;transform:scaleX(0.9241);">0.62</div>
<div class="t" style="left:511.30px;top:520px;font-size:9.6px;line-height:normal;color:#333;font-weight:bold;font-style:normal;transform:scaleX(0.6333);">%</div>
<div class="t" style="left:523.00px;top:514px;font-size:16.4px;line-height:normal;color:#d93f3c;font-weight:bold;font-style:normal;transform:scaleX(0.9604);">77.14%</div>
<svg style="left:546.2px;top:498.9px" width="14.599999999999909" height="13.899999999999977"><path d="M0.4 1.5 H13.049999999999908 V13.899999999999977" stroke="#d93f3c" stroke-width="3.1" fill="none" stroke-linejoin="miter"/><path d="M1.2 12.699999999999978 L11.99999999999991 2.6" stroke="#d93f3c" stroke-width="3.2" fill="none"/></svg>
<svg style="left:0;top:0" width="1024" height="602"><path d="M456.20 548.30 L484.50 548.30 L484.90 547.30 L485.50 548.20 L500.00 548.10 L520.00 548.20 L534.30 548.00 L534.60 539.70 L535.00 547.00 L541.50 547.00 L542.80 548.30 L550.50 548.20" stroke="#ec9a9a" stroke-width="0.9" fill="none" stroke-linejoin="round"/><circle cx="550.5" cy="548.2" r="1.4" fill="#d93f3c"/></svg>
<div class="r" style="left:439.50px;top:563.80px;width:129.20px;height:14.30px;background:#738499;box-shadow:0 1px 1px rgba(0,0,0,0.2)"></div>
<div class="t" style="left:451.00px;top:568px;font-size:5.2px;line-height:normal;color:#e6eaf0;font-weight:normal;font-style:normal;-webkit-text-stroke:0.08px #e6eaf0;transform:scaleX(1.1648);">SHOW EXTENDED DISKBUSY STATS</div>
<div class="t" style="left:677.85px;top:478px;font-size:7.2px;line-height:normal;color:#333;font-weight:bold;font-style:normal;transform:scaleX(0.9538);">Average deployment disk data transfer size</div>
<div class="t" style="left:751.58px;top:489px;font-size:44.5px;line-height:normal;color:#333333;font-weight:bold;font-style:normal;transform:scaleX(0.9203);">6.48</div>
<div class="t" style="left:833.00px;top:520px;font-size:9.6px;line-height:normal;color:#333;font-weight:bold;font-style:normal;transform:scaleX(0.8633);">KBytes</div>
<div class="t" style="left:868.30px;top:514px;font-size:16.4px;line-height:normal;color:#d93f3c;font-weight:bold;font-style:normal;transform:scaleX(0.9408);">24.04%</div>
<svg style="left:890.8px;top:498.9px" width="14.600000000000023" height="13.600000000000023"><path d="M0.4 1.5 H13.050000000000022 V13.600000000000023" stroke="#d93f3c" stroke-width="3.1" fill="none" stroke-linejoin="miter"/><path d="M1.2 12.400000000000023 L12.000000000000023 2.6" stroke="#d93f3c" stroke-width="3.2" fill="none"/></svg>
<svg style="left:0;top:0" width="1024" height="602"><path d="M789.60 546.00 L789.80 549.00 L790.00 547.80 L800.40 547.60 L801.00 546.50 L802.00 547.50 L820.50 547.50 L820.90 546.20 L822.00 548.00 L845.00 548.00 L867.70 548.00 L868.00 539.70 L868.40 548.00 L877.00 547.80 L877.30 546.80 L879.00 547.00 L884.00 547.80" stroke="#ec9a9a" stroke-width="0.9" fill="none" stroke-linejoin="round"/><circle cx="884" cy="547.8" r="1.4" fill="#d93f3c"/></svg>
<div class="r" style="left:771.30px;top:563.80px;width:130.80px;height:14.30px;background:#738499;box-shadow:0 1px 1px rgba(0,0,0,0.2)"></div>
<div class="t" style="left:782.50px;top:568px;font-size:5.2px;line-height:normal;color:#e6eaf0;font-weight:normal;font-style:normal;-webkit-text-stroke:0.08px #e6eaf0;transform:scaleX(1.1648);">SHOW EXTENDED DISKBSIZE STATS</div>
<svg style="left:9px;top:317px" width="17" height="17"><rect x="2" y="2" width="12.5" height="12.5" rx="1" fill="#333"/><rect x="3.2" y="0.2" width="1.3" height="2" fill="#555"/><rect x="3.2" y="14.5" width="1.3" height="2" fill="#555"/><rect x="0" y="3.2" width="2" height="1.3" fill="#555"/><rect x="14.5" y="3.2" width="2" height="1.3" fill="#555"/><rect x="6.1" y="0.2" width="1.3" height="2" fill="#555"/><rect x="6.1" y="14.5" width="1.3" height="2" fill="#555"/><rect x="0" y="6.1" width="2" height="1.3" fill="#555"/><rect x="14.5" y="6.1" width="2" height="1.3" fill="#555"/><rect x="9.0" y="0.2" width="1.3" height="2" fill="#555"/><rect x="9.0" y="14.5" width="1.3" height="2" fill="#555"/><rect x="0" y="9.0" width="2" height="1.3" fill="#555"/><rect x="14.5" y="9.0" width="2" height="1.3" fill="#555"/><rect x="11.899999999999999" y="0.2" width="1.3" height="2" fill="#555"/><rect x="11.899999999999999" y="14.5" width="1.3" height="2" fill="#555"/><rect x="0" y="11.899999999999999" width="2" height="1.3" fill="#555"/><rect x="14.5" y="11.899999999999999" width="2" height="1.3" fill="#555"/><rect x="3.2" y="3.6" width="1" height="1.3" fill="#ddd"/><circle cx="12.4" cy="12.6" r="0.6" fill="#ddd"/></svg>
<svg style="left:343px;top:317px" width="13" height="17"><path d="M1.5 0 H10.3 Q11.8 0 11.8 1.5 V7.4 L10.9 8.2 L11.8 9 V15 Q11.8 16.5 10.3 16.5 H1.5 Q0 16.5 0 15 V1.5 Q0 0 1.5 0Z" fill="#333"/><rect x="2" y="1.8" width="6.2" height="13" fill="#fff"/><rect x="3" y="2.8" width="4.2" height="1.7" fill="#333"/><rect x="3" y="5.9" width="4.2" height="1.7" fill="#333"/><rect x="3" y="9.1" width="4.2" height="1.7" fill="#333"/><rect x="3" y="12.2" width="4.2" height="1.7" fill="#333"/></svg>
<svg style="left:674.5px;top:317px" width="13" height="17"><path d="M1.5 0 H10.3 Q11.8 0 11.8 1.5 V7.4 L10.9 8.2 L11.8 9 V15 Q11.8 16.5 10.3 16.5 H1.5 Q0 16.5 0 15 V1.5 Q0 0 1.5 0Z" fill="#333"/><rect x="2" y="1.8" width="6.2" height="13" fill="#fff"/><rect x="3" y="2.8" width="4.2" height="1.7" fill="#333"/><rect x="3" y="5.9" width="4.2" height="1.7" fill="#333"/><rect x="3" y="9.1" width="4.2" height="1.7" fill="#333"/><rect x="3" y="12.2" width="4.2" height="1.7" fill="#333"/></svg>
<svg style="left:10.8px;top:454.2px" width="13" height="15"><rect x="0" y="0" width="12.4" height="14.6" rx="1.6" fill="#000"/><circle cx="6.2" cy="6" r="4.2" fill="#fff"/><circle cx="6.2" cy="5.6" r="0.9" fill="#777"/><path d="M6.5 7.5 L10 11.8" stroke="#000" stroke-width="2.2"/><path d="M7 8.5 L10 12" stroke="#fff" stroke-width="1"/><circle cx="2.2" cy="12.3" r="0.6" fill="#fff"/></svg>
<svg style="left:8.9px;top:588px" width="17" height="16"><rect x="0.65" y="0.65" width="14.7" height="16" rx="0.9" fill="none" stroke="#333" stroke-width="1.3"/><path d="M1.3 8.7 L3 8.7 L3.6 8.0 L4.3 8.7 L5.6 8.5 L6.6 3.6 L8.1 13.8 L9.6 7.6 L10.6 8.7 L14.1 8.7" stroke="#333" stroke-width="1.25" fill="none" stroke-linejoin="round"/></svg>
<svg style="left:340px;top:588px" width="17" height="16"><rect x="0.65" y="0.65" width="14.7" height="16" rx="0.9" fill="none" stroke="#333" stroke-width="1.3"/><path d="M1.3 8.7 L3 8.7 L3.6 8.0 L4.3 8.7 L5.6 8.5 L6.6 3.6 L8.1 13.8 L9.6 7.6 L10.6 8.7 L14.1 8.7" stroke="#333" stroke-width="1.25" fill="none" stroke-linejoin="round"/></svg>
<svg style="left:674px;top:588.8px" width="15" height="14"><rect x="4.2" y="0" width="5.2" height="4.2" rx="0.8" fill="#000"/><rect x="6.3" y="4" width="1" height="2" fill="#000"/><rect x="0.5" y="5.6" width="13" height="1.1" fill="#222"/><rect x="2.4" y="6.5" width="1" height="1.5" fill="#000"/><rect x="10.8" y="6.5" width="1" height="1.5" fill="#000"/><rect x="0.3" y="8" width="5" height="5" rx="0.8" fill="#000"/><rect x="8.6" y="8" width="5" height="5" rx="0.8" fill="#000"/></svg>
</body></html>
